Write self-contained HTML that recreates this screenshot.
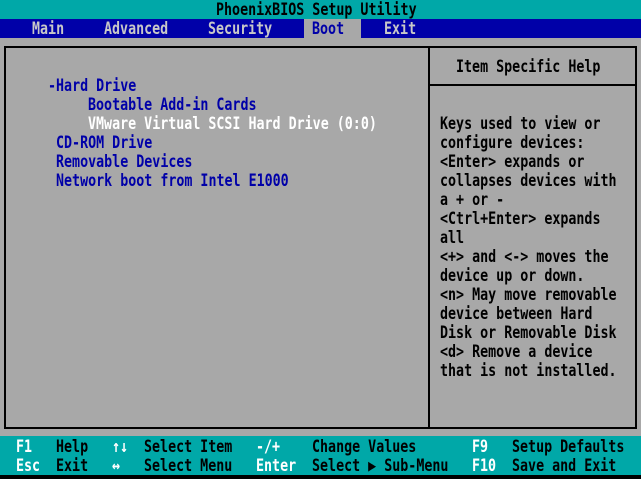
<!DOCTYPE html>
<html><head><meta charset="utf-8"><style>
html,body{margin:0;padding:0;}
body{width:641px;height:479px;background:#000;position:relative;overflow:hidden;font-family:"DejaVu Sans Mono","Liberation Mono",monospace;font-size:13.33px;font-weight:bold;}
.b{position:absolute;}
.t{position:absolute;height:19px;line-height:19px;white-space:pre;transform:translateY(1px) scaleY(1.25);transform-origin:0 50%;}
.w{color:#fff}.k{color:#000}.u{color:#0000a8}.g{color:#c8c8c8}
</style></head><body>
<div class="b" style="left:0;top:0;width:641px;height:19px;background:#00a8a8"></div>
<div class="b" style="left:0;top:19px;width:641px;height:19px;background:#0000a8"></div>
<div class="b" style="left:0;top:38px;width:641px;height:398px;background:#a8a8a8"></div>
<div class="b" style="left:0;top:436px;width:641px;height:39px;background:#00a8a8"></div>
<div class="b" style="left:304px;top:19px;width:57px;height:19px;background:#a8a8a8"></div>
<div class="b" style="left:4px;top:46px;width:629px;height:379px;border:2px solid #000"></div>
<div class="b" style="left:428px;top:46px;width:2px;height:381px;background:#000"></div>
<div class="b" style="left:428px;top:84px;width:207px;height:2px;background:#000"></div>

<div class="t k" style="left:216px;top:0">PhoenixBIOS Setup Utility</div>
<div class="t g" style="left:32px;top:19px">Main</div>
<div class="t g" style="left:104px;top:19px">Advanced</div>
<div class="t g" style="left:208px;top:19px">Security</div>
<div class="t u" style="left:312px;top:19px">Boot</div>
<div class="t g" style="left:384px;top:19px">Exit</div>

<div class="t k" style="left:456px;top:57px">Item Specific Help</div>
<div class="t u" style="left:48px;top:76px">-Hard Drive</div>
<div class="t u" style="left:88px;top:95px">Bootable Add-in Cards</div>
<div class="t w" style="left:88px;top:114px">VMware Virtual SCSI Hard Drive (0:0)</div>
<div class="t u" style="left:56px;top:133px">CD-ROM Drive</div>
<div class="t u" style="left:56px;top:152px">Removable Devices</div>
<div class="t u" style="left:56px;top:171px">Network boot from Intel E1000</div>

<div class="t k" style="left:440px;top:114px">Keys used to view or</div>
<div class="t k" style="left:440px;top:133px">configure devices:</div>
<div class="t k" style="left:440px;top:152px">&lt;Enter&gt; expands or</div>
<div class="t k" style="left:440px;top:171px">collapses devices with</div>
<div class="t k" style="left:440px;top:190px">a + or -</div>
<div class="t k" style="left:440px;top:209px">&lt;Ctrl+Enter&gt; expands</div>
<div class="t k" style="left:440px;top:228px">all</div>
<div class="t k" style="left:440px;top:247px">&lt;+&gt; and &lt;-&gt; moves the</div>
<div class="t k" style="left:440px;top:266px">device up or down.</div>
<div class="t k" style="left:440px;top:285px">&lt;n&gt; May move removable</div>
<div class="t k" style="left:440px;top:304px">device between Hard</div>
<div class="t k" style="left:440px;top:323px">Disk or Removable Disk</div>
<div class="t k" style="left:440px;top:342px">&lt;d&gt; Remove a device</div>
<div class="t k" style="left:440px;top:361px">that is not installed.</div>

<div class="t w" style="left:16px;top:437px">F1</div>
<div class="t k" style="left:56px;top:437px">Help</div>
<div class="t w" style="left:112px;top:437px">↑↓</div>
<div class="t k" style="left:144px;top:437px">Select Item</div>
<div class="t w" style="left:256px;top:437px">-/+</div>
<div class="t k" style="left:312px;top:437px">Change Values</div>
<div class="t w" style="left:472px;top:437px">F9</div>
<div class="t k" style="left:512px;top:437px">Setup Defaults</div>
<div class="t w" style="left:16px;top:456px">Esc</div>
<div class="t k" style="left:56px;top:456px">Exit</div>
<div class="t w" style="left:112px;top:456px">↔</div>
<div class="t k" style="left:144px;top:456px">Select Menu</div>
<div class="t w" style="left:256px;top:456px">Enter</div>
<div class="t k" style="left:312px;top:456px">Select ▶ Sub-Menu</div>
<div class="t w" style="left:472px;top:456px">F10</div>
<div class="t k" style="left:512px;top:456px">Save and Exit</div>
</body></html>
